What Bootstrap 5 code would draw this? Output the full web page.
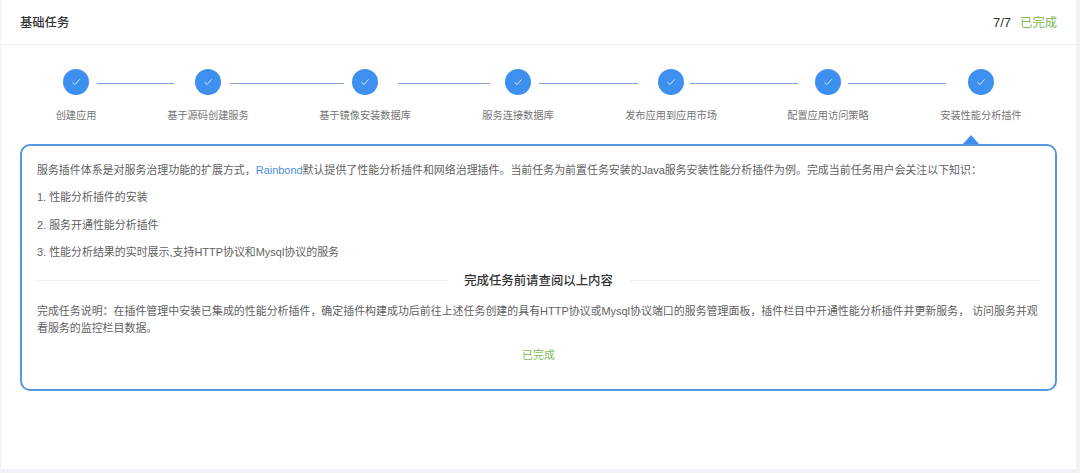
<!DOCTYPE html>
<html lang="zh">
<head>
<meta charset="utf-8">
<title>基础任务</title>
<link href="https://cdn.jsdelivr.net/npm/bootstrap@5.3.0/dist/css/bootstrap.min.css" rel="stylesheet">
<style>
html,body{height:473px;overflow:hidden;}
body{background:#f0f2f5;font-family:"Liberation Sans","Noto Sans CJK SC",sans-serif;color:#5f5f5f;font-size:10.95px;}
.task-card{width:1075px;height:469px;margin-left:1px;background:#fff;border:0;border-radius:0;}
.task-head{height:45px;padding:2px 19px 0;border-bottom:1px solid #f0f0f0;}
.task-title{font-size:12.3px;color:#333;font-weight:500;}
.task-count{font-size:13px;color:#333;}
.task-done{font-size:12.3px;color:#7dbb55;margin-left:9px;}
.step-row{padding:24px 0 0 62px;height:99px;}
.step-item{width:26px;flex:none;}
.step-dot{width:26px;height:26px;border-radius:50%;background:#3d8ff0;}
.step-name{margin-top:14px;font-size:10.2px;line-height:14px;white-space:nowrap;color:#757575;}
.step-link{flex:none;height:1px;background:#7ba3d6;margin-top:14px;}
.lk1{margin-left:8px;margin-right:21px;width:77px;}
.lk2{margin-left:9px;margin-right:8px;width:114px;}
.lk3{margin-left:20px;margin-right:15px;width:92px;}
.lk4{margin-left:8px;margin-right:20px;width:99px;}
.lk5{margin-left:6px;margin-right:17px;width:108px;}
.lk6{margin-left:7px;margin-right:22px;width:98px;}
.info-box{margin:0 0 0 19px;width:1037px;height:247px;border:2px solid #5897dc;border-radius:10px;padding:17px 15px 0;position:relative;}
.info-arrow{position:absolute;top:-11px;right:76px;width:0;height:0;border-left:8px solid transparent;border-right:8px solid transparent;border-bottom:9px solid #3d8ff0;}
.info-line{margin:0 0 13.3px;line-height:14px;}
.info-link{color:#4a90d9;text-decoration:none;}
.info-rule{margin-top:14px;margin-bottom:14.5px;}
.rule-bar{flex:1;height:1px;background:#f0f0f0;}
.rule-text{font-size:12.4px;color:#333;padding:0 17px;line-height:16px;font-weight:500;}
.info-note{line-height:17px;margin:0;}
.info-state{color:#7dbb55;line-height:14px;margin-top:10.5px;}
</style>
</head>
<body>
<div class="card task-card">
  <div class="task-head d-flex align-items-center justify-content-between">
    <div class="task-title">基础任务</div>
    <div class="d-flex align-items-center"><span class="task-count">7/7</span><span class="task-done">已完成</span></div>
  </div>
  <div class="step-row d-flex align-items-start">
    <div class="step-item d-flex flex-column align-items-center"><div class="step-dot d-flex align-items-center justify-content-center"><svg width="10" height="10" viewBox="0 0 10 10"><path d="M1.5 5.2 4 7.6 8.6 2.4" fill="none" stroke="#dbeafe" stroke-width="1"/></svg></div><div class="step-name">创建应用</div></div>
    <div class="step-link lk1"></div>
    <div class="step-item d-flex flex-column align-items-center"><div class="step-dot d-flex align-items-center justify-content-center"><svg width="10" height="10" viewBox="0 0 10 10"><path d="M1.5 5.2 4 7.6 8.6 2.4" fill="none" stroke="#dbeafe" stroke-width="1"/></svg></div><div class="step-name">基于源码创建服务</div></div>
    <div class="step-link lk2"></div>
    <div class="step-item d-flex flex-column align-items-center"><div class="step-dot d-flex align-items-center justify-content-center"><svg width="10" height="10" viewBox="0 0 10 10"><path d="M1.5 5.2 4 7.6 8.6 2.4" fill="none" stroke="#dbeafe" stroke-width="1"/></svg></div><div class="step-name">基于镜像安装数据库</div></div>
    <div class="step-link lk3"></div>
    <div class="step-item d-flex flex-column align-items-center"><div class="step-dot d-flex align-items-center justify-content-center"><svg width="10" height="10" viewBox="0 0 10 10"><path d="M1.5 5.2 4 7.6 8.6 2.4" fill="none" stroke="#dbeafe" stroke-width="1"/></svg></div><div class="step-name">服务连接数据库</div></div>
    <div class="step-link lk4"></div>
    <div class="step-item d-flex flex-column align-items-center"><div class="step-dot d-flex align-items-center justify-content-center"><svg width="10" height="10" viewBox="0 0 10 10"><path d="M1.5 5.2 4 7.6 8.6 2.4" fill="none" stroke="#dbeafe" stroke-width="1"/></svg></div><div class="step-name">发布应用到应用市场</div></div>
    <div class="step-link lk5"></div>
    <div class="step-item d-flex flex-column align-items-center"><div class="step-dot d-flex align-items-center justify-content-center"><svg width="10" height="10" viewBox="0 0 10 10"><path d="M1.5 5.2 4 7.6 8.6 2.4" fill="none" stroke="#dbeafe" stroke-width="1"/></svg></div><div class="step-name">配置应用访问策略</div></div>
    <div class="step-link lk6"></div>
    <div class="step-item d-flex flex-column align-items-center"><div class="step-dot d-flex align-items-center justify-content-center"><svg width="10" height="10" viewBox="0 0 10 10"><path d="M1.5 5.2 4 7.6 8.6 2.4" fill="none" stroke="#dbeafe" stroke-width="1"/></svg></div><div class="step-name">安装性能分析插件</div></div>
  </div>
  <div class="info-box">
    <div class="info-arrow"></div>
    <p class="info-line">服务插件体系是对服务治理功能的扩展方式，<a class="info-link" href="#">Rainbond</a>默认提供了性能分析插件和网络治理插件。当前任务为前置任务安装的Java服务安装性能分析插件为例。完成当前任务用户会关注以下知识：</p>
    <p class="info-line">1. 性能分析插件的安装</p>
    <p class="info-line">2. 服务开通性能分析插件</p>
    <p class="info-line">3. 性能分析结果的实时展示,支持HTTP协议和Mysql协议的服务</p>
    <div class="info-rule d-flex align-items-center"><div class="rule-bar"></div><div class="rule-text">完成任务前请查阅以上内容</div><div class="rule-bar"></div></div>
    <p class="info-note">完成任务说明：在插件管理中安装已集成的性能分析插件，确定插件构建成功后前往上述任务创建的具有HTTP协议或Mysql协议端口的服务管理面板，插件栏目中开通性能分析插件并更新服务， 访问服务并观看服务的监控栏目数据。</p>
    <div class="info-state text-center">已完成</div>
  </div>
</div>
<script src="https://cdn.jsdelivr.net/npm/bootstrap@5.3.0/dist/js/bootstrap.bundle.min.js"></script>
</body>
</html>
